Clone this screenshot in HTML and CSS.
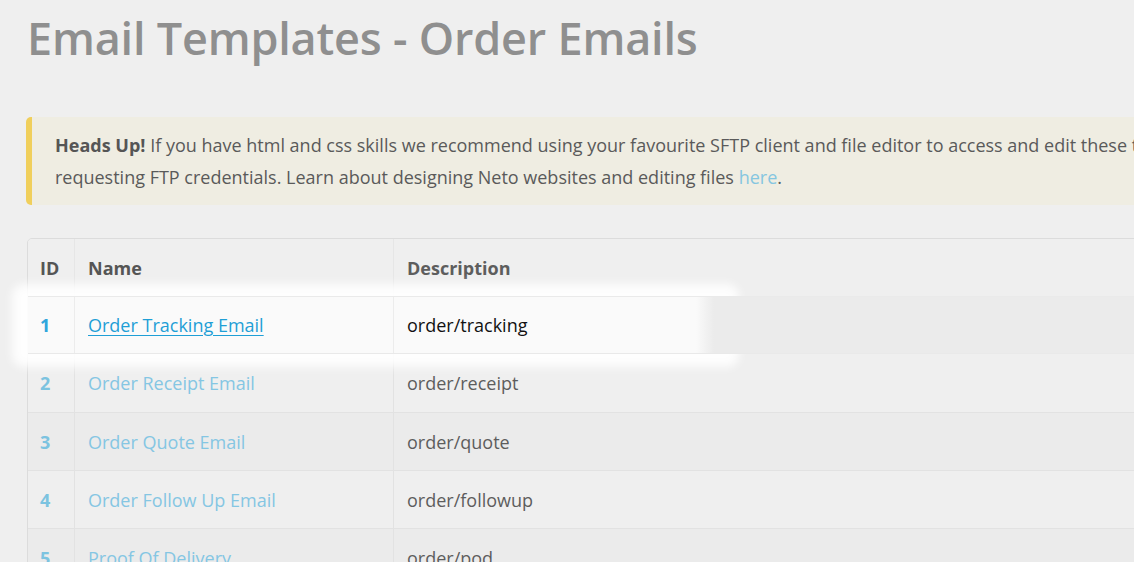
FILE: index.html
```html
<!DOCTYPE html>
<html lang="en">
<head>
<meta charset="utf-8">
<title>Email Templates - Order Emails</title>
<link rel="stylesheet" href="styles.css">
</head>
<body>
<div class="page">
  <h1 class="title">Email Templates - Order Emails</h1>
  <div class="alert">
    <b>Heads Up!</b> If you have html and css skills we recommend using your favourite SFTP client and file editor to access and edit these templates rather than<br>requesting FTP credentials. Learn about designing Neto websites and editing files <a href="#" class="alert-link">here</a>.
  </div>
  <div class="table-wrap">
    <div class="spotlight"></div>
    <div class="tbl">
      <div class="row head">
        <div class="cell c-id">ID</div>
        <div class="cell c-name">Name</div>
        <div class="cell c-desc">Description</div>
      </div>
      <div class="row odd active">
        <div class="cell c-id"><span class="num">1</span></div>
        <div class="cell c-name"><a href="#" class="tlink">Order Tracking Email</a></div>
        <div class="cell c-desc">order/tracking</div>
      </div>
      <div class="row even">
        <div class="cell c-id"><span class="num">2</span></div>
        <div class="cell c-name"><a href="#" class="tlink">Order Receipt Email</a></div>
        <div class="cell c-desc">order/receipt</div>
      </div>
      <div class="row odd">
        <div class="cell c-id"><span class="num">3</span></div>
        <div class="cell c-name"><a href="#" class="tlink">Order Quote Email</a></div>
        <div class="cell c-desc">order/quote</div>
      </div>
      <div class="row even">
        <div class="cell c-id"><span class="num">4</span></div>
        <div class="cell c-name"><a href="#" class="tlink">Order Follow Up Email</a></div>
        <div class="cell c-desc">order/followup</div>
      </div>
      <div class="row odd">
        <div class="cell c-id"><span class="num">5</span></div>
        <div class="cell c-name"><a href="#" class="tlink">Proof Of Delivery</a></div>
        <div class="cell c-desc">order/pod</div>
      </div>
    </div>
  </div>
</div>
</body>
</html>
```
FILE: styles.css
```css
html, body {
  margin: 0;
  padding: 0;
  background: #efefef;
  overflow: hidden;
}
body {
  font-family: "Open Sans", "Noto Sans", "Liberation Sans", sans-serif;
  color: #5a5a5a;
  width: 1134px;
  height: 562px;
}
.page {
  width: 1300px;
  padding: 9px 0 0 26px;
}
.title {
  margin: 0 0 0 1px;
  font-size: 45px;
  line-height: 58px;
  font-weight: 600;
  color: #8f8f8f;
  letter-spacing: -0.2px;
}
.alert {
  margin-top: 50px;
  background: #efede2;
  border-left: 6px solid #f0cf5c;
  border-radius: 5px;
  padding: 12px 20px 12px 23px;
  font-size: 18px;
  line-height: 32px;
  color: #5a5a5a;
  white-space: nowrap;
}
.alert b {
  color: #555;
  font-weight: 700;
}
.alert-link {
  color: #85c6e0;
  text-decoration: none;
}
.table-wrap {
  position: relative;
  margin-top: 33px;
  margin-left: 1px;
}
.spotlight {
  position: absolute;
  left: -15px;
  top: 46px;
  width: 727px;
  height: 83px;
  background: rgba(255, 255, 255, 0.9);
  border-radius: 12px;
  filter: blur(5px);
  z-index: 2;
}
.tbl {
  border: 1px solid #dcdcdc;
  border-radius: 5px;
  overflow: hidden;
}
.row {
  display: grid;
  grid-template-columns: 46px 319px 1fr;
  height: 57px;
  border-top: 1px solid #e2e2e2;
}
.row.head {
  border-top: none;
  height: 57px;
  background: #efefef;
  font-weight: 700;
  color: #555;
}
.row.odd { background: #ebebeb; }
.row.even { background: #efefef; }
.row.active {
  position: relative;
  z-index: 3;
  background: linear-gradient(90deg, #fafafa 0, #fafafa 668px, #ebebeb 686px);
  border-top-color: #eaeaea;
  border-bottom: 1px solid #e9e9e9;
  height: 56px;
}
.row.active + .row { border-top: none; height: 58px; }
.cell {
  display: flex;
  align-items: center;
  padding-left: 13px;
  font-size: 18px;
  white-space: nowrap;
}
.c-id { padding-left: 12px; }
.c-name, .c-desc { border-left: 1px solid #e2e2e2; }
.active .c-name, .active .c-desc { border-left-color: #ececec; }
.head .c-name, .head .c-desc { border-left-color: #e6e6e6; }
.num {
  font-weight: 700;
  color: #7cc3e0;
}
.tlink {
  color: #85c6e3;
  text-decoration: none;
}
.c-desc { color: #5d5d5d; }
.active .num { color: #2fa6dc; }
.active .tlink {
  color: #1f9fd6;
  text-decoration: underline;
  text-underline-offset: 3px;
}
.active .c-desc { color: #111; }
```
